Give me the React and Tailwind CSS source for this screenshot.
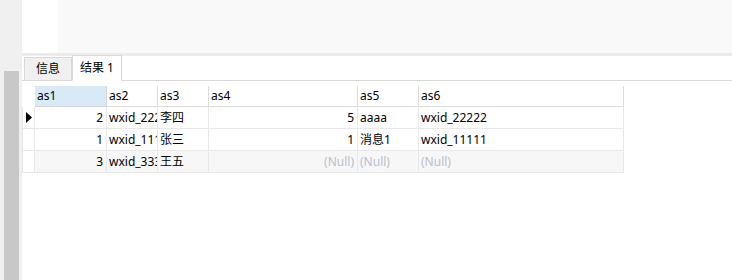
import React from "react";

const cols = [
  { key: "as1", w: "w-[72px]", align: "right" },
  { key: "as2", w: "w-[51px]", align: "left" },
  { key: "as3", w: "w-[51px]", align: "left" },
  { key: "as4", w: "w-[149px]", align: "right" },
  { key: "as5", w: "w-[61px]", align: "left" },
  { key: "as6", w: "w-[205px]", align: "left" },
];

const rows = [
  ["2", "wxid_22222", "李四", "5", "aaaa", "wxid_22222"],
  ["1", "wxid_11111", "张三", "1", "消息1", "wxid_11111"],
  ["3", "wxid_33333", "王五", null, null, null],
];

const font = { fontFamily: '"Noto Sans", "Noto Sans CJK SC", sans-serif' };

export default function App() {
  return (
    <div className="w-[732px] h-[280px] flex bg-white overflow-hidden text-[12px] text-black" style={font}>
      <div className="w-[22px] h-full bg-[#f0f0f0] flex flex-col">
        <div className="h-[71px]" />
        <div className="flex-1 ml-[4px] w-[15px] bg-[#c8c8c8]" />
      </div>
      <div className="flex-1 flex flex-col">
        <div className="h-[53px] flex">
          <div className="w-[36px] bg-white" />
          <div className="flex-1 bg-[#f9f9f9]" />
        </div>
        <div className="h-[3px] bg-[#ebebeb]" />
        <div className="h-[25px] flex items-end border-b border-[#d9d9d9] bg-white">
          <div className="ml-[2px] w-[48px] h-[24px] -mb-px bg-[#f0f0f0] border border-[#d9d9d9] flex items-center justify-center">
            信息
          </div>
          <div className="w-[50px] h-[26px] -mb-px bg-white border border-[#d9d9d9] border-b-white flex items-center justify-center">
            结果 1
          </div>
        </div>
        <div className="pt-[5px]">
          <div className="flex h-[21px]">
            <div className="w-[13px] bg-white" />
            {cols.map((c, i) => (
              <div
                key={c.key}
                className={`${c.w} h-full flex items-center pl-[2px] border-r border-b ${i === 0 ? "bg-[#d9eaf7] border-[#d5d5d5]" : "bg-white border-[#dcdcdc]"}`}
              >
                {c.key}
              </div>
            ))}
          </div>
          {rows.map((r, ri) => (
            <div key={ri} className="flex h-[22px]">
              <div className="w-[13px] h-full border-l border-r border-b border-[#e6e6e6] bg-white flex items-center justify-start pl-[3px]">
                {ri === 0 && (
                  <svg width="6" height="11" viewBox="0 0 6 11">
                    <path d="M0 0 L6 5.5 L0 11 Z" fill="#000" />
                  </svg>
                )}
              </div>
              {cols.map((c, ci) => {
                const v = r[ci];
                const isNull = v === null;
                return (
                  <div
                    key={c.key}
                    className={`${c.w} h-full flex items-center overflow-hidden whitespace-nowrap border-r border-b border-[#e8e8e8] ${ri === 2 ? "bg-[#f7f7f7]" : "bg-white"} ${c.align === "right" ? "justify-end pr-[3px]" : "pl-[2px]"} ${isNull ? "text-[#b8bfcf]" : ""}`}
                  >
                    {isNull ? "(Null)" : v}
                  </div>
                );
              })}
            </div>
          ))}
        </div>
      </div>
    </div>
  );
}
